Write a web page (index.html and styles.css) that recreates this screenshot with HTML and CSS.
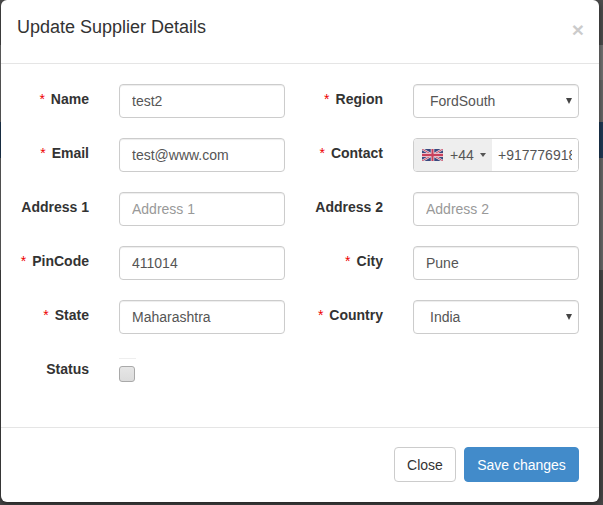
FILE: index.html
```html
<!DOCTYPE html>
<html lang="en">
<head>
<meta charset="utf-8">
<title>Update Supplier Details</title>
<link rel="stylesheet" href="styles.css">
</head>
<body>
<div class="modal">
  <header class="modal-header">
    <h4 class="modal-title">Update Supplier Details</h4>
    <button class="close" type="button">×</button>
  </header>
  <form class="modal-body">
    <div class="row">
      <div class="field"><label class="label"><span class="req">*</span>Name</label><input class="control" value="test2"></div>
      <div class="field second"><label class="label"><span class="req">*</span>Region</label><div class="select-wrap"><select class="control select"><option>FordSouth</option></select></div></div>
    </div>
    <div class="row">
      <div class="field"><label class="label"><span class="req">*</span>Email</label><input class="control" value="test@www.com"></div>
      <div class="field second"><label class="label"><span class="req">*</span>Contact</label>
        <div class="phone">
          <div class="dial">
            <svg class="flag" viewBox="0 0 60 30" width="21" height="12" preserveAspectRatio="none">
              <rect width="60" height="30" fill="#3a4a80"/>
              <path d="M0 0L60 30M60 0L0 30" stroke="#e8dfe4" stroke-width="6"/>
              <path d="M0 0L60 30M60 0L0 30" stroke="#c8415c" stroke-width="2.4"/>
              <path d="M30 0V30M0 15H60" stroke="#f2e9ec" stroke-width="10"/>
              <path d="M30 0V30M0 15H60" stroke="#c8415c" stroke-width="6"/>
            </svg>
            <span class="code">+44</span>
            <span class="caret"></span>
          </div>
          <input class="phone-input" value="+917776918000">
        </div>
      </div>
    </div>
    <div class="row">
      <div class="field"><label class="label">Address 1</label><input class="control" placeholder="Address 1"></div>
      <div class="field second"><label class="label">Address 2</label><input class="control" placeholder="Address 2"></div>
    </div>
    <div class="row">
      <div class="field"><label class="label"><span class="req">*</span>PinCode</label><input class="control" value="411014"></div>
      <div class="field second"><label class="label"><span class="req">*</span>City</label><input class="control" value="Pune"></div>
    </div>
    <div class="row">
      <div class="field"><label class="label"><span class="req">*</span>State</label><input class="control" value="Maharashtra"></div>
      <div class="field second"><label class="label"><span class="req">*</span>Country</label><div class="select-wrap"><select class="control select"><option>India</option></select></div></div>
    </div>
    <div class="row status-row">
      <div class="field"><label class="label">Status</label><div class="check-wrap"><input class="check" type="checkbox"></div></div>
    </div>
  </form>
  <footer class="modal-footer">
    <button class="btn btn-default" type="button">Close</button>
    <button class="btn btn-primary" type="button">Save changes</button>
  </footer>
</div>
</body>
</html>
```
FILE: styles.css
```css
* { box-sizing: border-box; }
html, body { height: 100%; }
body {
  margin: 0;
  overflow: hidden;
  font-family: "Liberation Sans", Arial, sans-serif;
  font-size: 14px;
  color: #333;
  background: linear-gradient(to bottom,
    #4d4d4d 0 45px, #737373 45px 80px, #686868 80px 122px,
    #1f3a56 122px 158px, #686868 158px 270px, #474747 270px 100%);
}
.modal {
  display: flex;
  flex-direction: column;
  width: 598px;
  height: 502px;
  margin-left: 1px;
  background: #fff;
  border-radius: 6px;
  box-shadow: 0 2px 6px rgba(0,0,0,.55);
}
.modal-header {
  display: flex;
  justify-content: space-between;
  align-items: flex-start;
  height: 64px;
  padding: 14px 15px 0 16px;
  border-bottom: 1px solid #e5e5e5;
}
.modal-title {
  margin: 0;
  font-size: 18px;
  font-weight: 400;
  line-height: 26px;
}
.close {
  margin: 5px 0 0;
  padding: 0;
  border: 0;
  background: none;
  font: bold 21px/21px "Liberation Sans", Arial, sans-serif;
  color: #000;
  opacity: .2;
}
.modal-body {
  flex: 1;
  padding-top: 20px;
  display: flex;
  flex-direction: column;
  gap: 20px;
}
.row { display: flex; height: 34px; }
.field { display: flex; width: 284px; }
.second { width: 294px; }
.label {
  width: 88px;
  margin-right: 30px;
  padding-top: 7px;
  text-align: right;
  font-weight: 700;
  line-height: 16px;
  white-space: nowrap;
}
.second .label { width: 98px; }
.req { color: #e00; font-weight: 400; margin-right: 6px; }
.control {
  width: 166px;
  height: 34px;
  padding: 6px 12px;
  font: 14px/20px "Liberation Sans", Arial, sans-serif;
  color: #555;
  background: #fff;
  border: 1px solid #ccc;
  border-radius: 4px;
  box-shadow: inset 0 1px 1px rgba(0,0,0,.075);
  outline: none;
}
.control::placeholder { color: #999; opacity: 1; }
.select-wrap { position: relative; width: 166px; height: 34px; }
.select { appearance: none; display: block; padding-left: 16px; }
.select-wrap::after {
  content: "";
  position: absolute;
  top: 14px;
  right: 7px;
  border-left: 3px solid transparent;
  border-right: 3px solid transparent;
  border-top: 6px solid #444;
}
.phone {
  display: flex;
  width: 166px;
  height: 34px;
  border: 1px solid #ccc;
  border-radius: 4px;
  overflow: hidden;
}
.dial {
  display: flex;
  align-items: center;
  flex: none;
  width: 78px;
  padding-left: 8px;
  background: #eee;
  color: #555;
}
.flag { display: block; }
.code { margin-left: 7px; }
.caret {
  margin-left: 6px;
  width: 0;
  height: 0;
  border-left: 3px solid transparent;
  border-right: 3px solid transparent;
  border-top: 4px solid #555;
}
.phone-input {
  flex: 1;
  min-width: 0;
  border: 0;
  outline: none;
  padding: 0 6px;
  font: 14px "Liberation Sans", Arial, sans-serif;
  color: #555;
}
.check-wrap {
  width: 17px;
  height: 34px;
  padding-top: 7px;
  border-top: 1px solid #eee;
  margin-top: 4px;
}
.check {
  appearance: none;
  display: block;
  width: 16px;
  height: 16px;
  margin: 0;
  background: linear-gradient(#e6e6e6, #dcdcdc);
  border: 1px solid #a9a9a9;
  border-radius: 3px;
}
.modal-footer {
  display: flex;
  justify-content: flex-end;
  gap: 8px;
  height: 75px;
  padding: 19px 20px 0;
  border-top: 1px solid #e5e5e5;
}
.btn {
  height: 35px;
  font: 14px "Liberation Sans", Arial, sans-serif;
  padding: 0;
  border: 1px solid;
  border-radius: 4px;
}
.btn-default { width: 62px; color: #333; background: #fff; border-color: #ccc; }
.btn-primary { width: 115px; color: #fff; background: #428bca; border-color: #428bca; }
```
